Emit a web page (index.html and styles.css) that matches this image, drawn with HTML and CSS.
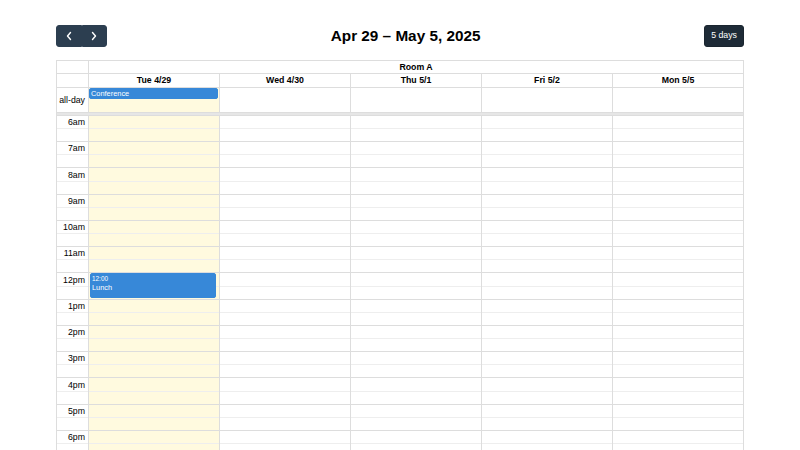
FILE: index.html
```html
<!DOCTYPE html>
<html lang="en">
<head>
<meta charset="utf-8">
<title>Calendar</title>
<link rel="stylesheet" href="styles.css">
</head>
<body>
<div class="cal">
  <div class="toolbar">
    <div class="btn-group">
      <button class="btn nav prev" aria-label="prev"><svg width="10" height="10" viewBox="0 0 10 10"><polyline points="6.5,1.5 3.5,5 6.5,8.5" fill="none" stroke="#fff" stroke-width="1.4" stroke-linecap="round" stroke-linejoin="round"/></svg></button>
      <button class="btn nav next" aria-label="next"><svg width="10" height="10" viewBox="0 0 10 10"><polyline points="3.5,1.5 6.5,5 3.5,8.5" fill="none" stroke="#fff" stroke-width="1.4" stroke-linecap="round" stroke-linejoin="round"/></svg></button>
    </div>
    <h2 class="title">Apr 29 – May 5, 2025</h2>
    <button class="btn active">5 days</button>
  </div>

  <div class="grid">
    <div class="row row-res">
      <div class="cell axis"></div>
      <div class="cell res">Room A</div>
    </div>
    <div class="row row-days">
      <div class="cell axis"></div>
      <div class="cell day">Tue 4/29</div>
      <div class="cell day">Wed 4/30</div>
      <div class="cell day">Thu 5/1</div>
      <div class="cell day">Fri 5/2</div>
      <div class="cell day">Mon 5/5</div>
    </div>
    <div class="row row-allday">
      <div class="cell axis allday-label">all-day</div>
      <div class="cell today"><div class="ev ev-allday">Conference</div></div>
      <div class="cell"></div>
      <div class="cell"></div>
      <div class="cell"></div>
      <div class="cell"></div>
    </div>
    <div class="divider"></div>
    <div class="row row-body">
      <div class="cell axis lanes times">
        <div class="hour">6am</div>
        <div class="hour">7am</div>
        <div class="hour">8am</div>
        <div class="hour">9am</div>
        <div class="hour">10am</div>
        <div class="hour">11am</div>
        <div class="hour">12pm</div>
        <div class="hour">1pm</div>
        <div class="hour">2pm</div>
        <div class="hour">3pm</div>
        <div class="hour">4pm</div>
        <div class="hour">5pm</div>
        <div class="hour">6pm</div>
      </div>
      <div class="cell lanes today">
        <div class="ev ev-timed ev-lunch">
          <div class="ev-time">12:00</div>
          <div class="ev-title">Lunch</div>
        </div>
      </div>
      <div class="cell lanes"></div>
      <div class="cell lanes"></div>
      <div class="cell lanes"></div>
      <div class="cell lanes"></div>
    </div>
  </div>
</div>
</body>
</html>
```

FILE: styles.css
```css
html, body {
  margin: 0;
  padding: 0;
  background: #fff;
  overflow: hidden;
  height: 450px;
}

body {
  font-family: "Liberation Sans", Arial, sans-serif;
  font-size: 8.75px;
  color: #000;
}

.cal {
  width: 688px;
  margin: 25px 0 0 56px;
}

.toolbar {
  display: flex;
  align-items: center;
  justify-content: space-between;
  height: 22px;
  margin-bottom: 13px;
}

.btn-group {
  display: flex;
}

.btn {
  font-family: inherit;
  font-size: 8.75px;
  line-height: 1.5;
  color: #fff;
  background: #2c3e50;
  border: 1px solid #2c3e50;
  border-radius: 3px;
  padding: 3.5px 5.7px;
  height: 22px;
  box-sizing: border-box;
  display: flex;
  align-items: center;
  justify-content: center;
  white-space: nowrap;
}

.btn.nav {
  width: 25.5px;
  padding: 0;
}

.btn.prev {
  border-top-right-radius: 0;
  border-bottom-right-radius: 0;
}

.btn.next {
  border-top-left-radius: 0;
  border-bottom-left-radius: 0;
}

.btn.active {
  background: #1e2b37;
  border-color: #1a252f;
  padding: 3.5px 6px;
}

.title {
  margin: 0;
  font-size: 15.3px;
  font-weight: bold;
  line-height: 1;
}

.grid {
  border-top: 1px solid #ddd;
  border-left: 1px solid #ddd;
  width: 688px;
  box-sizing: border-box;
}

.row {
  display: grid;
  grid-template-columns: 32px repeat(5, 131px);
}

.cell {
  box-sizing: border-box;
  border-right: 1px solid #ddd;
  border-bottom: 1px solid #ddd;
}

.row-res .cell {
  height: 13px;
}

.res {
  grid-column: 2 / span 5;
  text-align: center;
  font-weight: bold;
  line-height: 12px;
}

.row-days .cell {
  height: 14px;
}

.day {
  text-align: center;
  font-weight: bold;
  line-height: 13px;
}

.row-allday .cell {
  height: 25px;
  position: relative;
}

.allday-label {
  display: flex;
  align-items: center;
  justify-content: flex-end;
  padding-right: 3px;
}

.today {
  background-color: #fffadf;
}

.divider {
  height: 2px;
  background: #e6e6e6;
  border-bottom: 1px solid #ddd;
  border-right: 1px solid #ddd;
}

.row-body .cell {
  border-bottom: none;
  height: 341.25px;
}

.lanes {
  position: relative;
  background-image: repeating-linear-gradient(
    to bottom,
    transparent 0,
    transparent 12.125px,
    #eee 12.125px,
    #eee 13.125px,
    transparent 13.125px,
    transparent 25.25px,
    #ddd 25.25px,
    #ddd 26.25px
  );
}

.times {
  display: flex;
  flex-direction: column;
}

.hour {
  height: 26.25px;
  flex: none;
  line-height: 13.125px;
  text-align: right;
  padding-right: 3px;
  box-sizing: border-box;
}

.ev {
  background: #3788d8;
  border: 1px solid #3788d8;
  color: #fff;
  border-radius: 2px;
  box-sizing: border-box;
  font-size: 7.4px;
}

.ev-allday {
  margin: 0 1px 0 0;
  height: 11px;
  line-height: 9px;
  padding: 0 1px;
  overflow: hidden;
  white-space: nowrap;
}

.ev-timed {
  position: absolute;
  left: 1px;
  right: 3px;
  padding: 1px 1px 0;
}

.ev-lunch {
  top: 157px;
  height: 25.25px;
}

.ev-time {
  font-size: 6.4px;
  line-height: 7.5px;
}

.ev-title {
  line-height: 10px;
}
```
